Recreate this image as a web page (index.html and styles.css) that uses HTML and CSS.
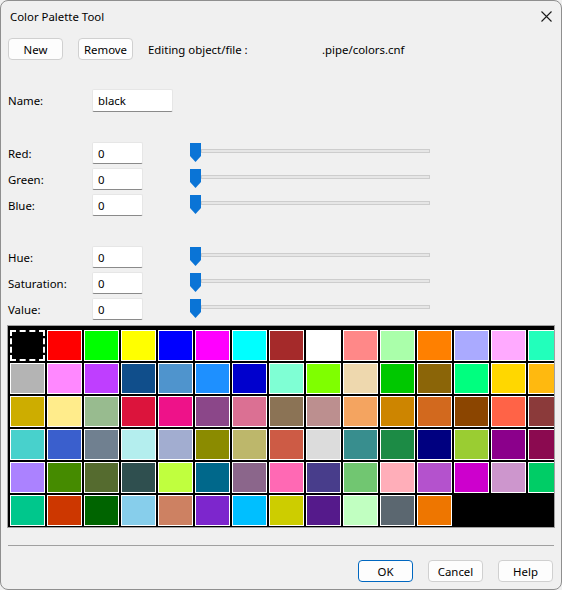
FILE: index.html
```html
<!DOCTYPE html>
<html>
<head>
<meta charset="utf-8">
<title>Color Palette Tool</title>
<link rel="stylesheet" href="styles.css">
</head>
<body>
<div class="window">
  <div class="titlebar">
    <span class="title">Color Palette Tool</span>
    <svg class="close" width="11" height="11" viewBox="0 0 11 11"><path d="M0.5 0.5 L10.5 10.5 M10.5 0.5 L0.5 10.5" stroke="#1a1a1a" stroke-width="1.1" fill="none"/></svg>
  </div>

  <div class="toolbar">
    <button class="btn">New</button>
    <button class="btn">Remove</button>
    <span class="editing">Editing object/file :</span>
    <span class="file">.pipe/colors.cnf</span>
  </div>

  <div class="row name-row">
    <span class="label">Name:</span>
    <div class="field field-name">black</div>
  </div>

  <div class="group">
    <div class="row">
      <span class="label">Red:</span>
      <div class="field field-num">0</div>
      <div class="slider"><svg class="thumb" width="11" height="20" viewBox="0 0 11 20"><path d="M0 0 H11 V13 L5.5 19 L0 13 Z" fill="#0a74d6"/></svg><div class="track"></div></div>
    </div>
    <div class="row">
      <span class="label">Green:</span>
      <div class="field field-num">0</div>
      <div class="slider"><svg class="thumb" width="11" height="20" viewBox="0 0 11 20"><path d="M0 0 H11 V13 L5.5 19 L0 13 Z" fill="#0a74d6"/></svg><div class="track"></div></div>
    </div>
    <div class="row">
      <span class="label">Blue:</span>
      <div class="field field-num">0</div>
      <div class="slider"><svg class="thumb" width="11" height="20" viewBox="0 0 11 20"><path d="M0 0 H11 V13 L5.5 19 L0 13 Z" fill="#0a74d6"/></svg><div class="track"></div></div>
    </div>
  </div>

  <div class="group">
    <div class="row">
      <span class="label">Hue:</span>
      <div class="field field-num">0</div>
      <div class="slider"><svg class="thumb" width="11" height="20" viewBox="0 0 11 20"><path d="M0 0 H11 V13 L5.5 19 L0 13 Z" fill="#0a74d6"/></svg><div class="track"></div></div>
    </div>
    <div class="row">
      <span class="label">Saturation:</span>
      <div class="field field-num">0</div>
      <div class="slider"><svg class="thumb" width="11" height="20" viewBox="0 0 11 20"><path d="M0 0 H11 V13 L5.5 19 L0 13 Z" fill="#0a74d6"/></svg><div class="track"></div></div>
    </div>
    <div class="row">
      <span class="label">Value:</span>
      <div class="field field-num">0</div>
      <div class="slider"><svg class="thumb" width="11" height="20" viewBox="0 0 11 20"><path d="M0 0 H11 V13 L5.5 19 L0 13 Z" fill="#0a74d6"/></svg><div class="track"></div></div>
    </div>
  </div>

  <div class="palette">
    <div class="cells">
      <div class="cell selected"></div>
      <div class="cell" style="background:#ff0000"></div>
      <div class="cell" style="background:#00ff00"></div>
      <div class="cell" style="background:#ffff00"></div>
      <div class="cell" style="background:#0000ff"></div>
      <div class="cell" style="background:#ff00ff"></div>
      <div class="cell" style="background:#00ffff"></div>
      <div class="cell" style="background:#a52a2a"></div>
      <div class="cell" style="background:#ffffff"></div>
      <div class="cell" style="background:#ff8888"></div>
      <div class="cell" style="background:#aaffaa"></div>
      <div class="cell" style="background:#ff8000"></div>
      <div class="cell" style="background:#aaaaff"></div>
      <div class="cell" style="background:#ffaaff"></div>
      <div class="cell" style="background:#22ffbb"></div>

      <div class="cell" style="background:#b4b4b4"></div>
      <div class="cell" style="background:#ff88ff"></div>
      <div class="cell" style="background:#bf3eff"></div>
      <div class="cell" style="background:#104e8b"></div>
      <div class="cell" style="background:#4f94cd"></div>
      <div class="cell" style="background:#1e90ff"></div>
      <div class="cell" style="background:#0000cd"></div>
      <div class="cell" style="background:#7fffd4"></div>
      <div class="cell" style="background:#7fff00"></div>
      <div class="cell" style="background:#eed8ae"></div>
      <div class="cell" style="background:#00c800"></div>
      <div class="cell" style="background:#8b6508"></div>
      <div class="cell" style="background:#00ff7f"></div>
      <div class="cell" style="background:#ffd700"></div>
      <div class="cell" style="background:#ffb90f"></div>

      <div class="cell" style="background:#cdad00"></div>
      <div class="cell" style="background:#ffec8b"></div>
      <div class="cell" style="background:#98bb8f"></div>
      <div class="cell" style="background:#dc143c"></div>
      <div class="cell" style="background:#ee1289"></div>
      <div class="cell" style="background:#8b4789"></div>
      <div class="cell" style="background:#db7093"></div>
      <div class="cell" style="background:#8b7355"></div>
      <div class="cell" style="background:#bc8f8f"></div>
      <div class="cell" style="background:#f4a460"></div>
      <div class="cell" style="background:#cd8500"></div>
      <div class="cell" style="background:#d2691e"></div>
      <div class="cell" style="background:#8b4500"></div>
      <div class="cell" style="background:#ff6347"></div>
      <div class="cell" style="background:#8b3a3a"></div>

      <div class="cell" style="background:#48d1cc"></div>
      <div class="cell" style="background:#3a5fcd"></div>
      <div class="cell" style="background:#708090"></div>
      <div class="cell" style="background:#b4eeee"></div>
      <div class="cell" style="background:#a2add0"></div>
      <div class="cell" style="background:#8b8b00"></div>
      <div class="cell" style="background:#bdb76b"></div>
      <div class="cell" style="background:#cd5b45"></div>
      <div class="cell" style="background:#dcdcdc"></div>
      <div class="cell" style="background:#388e8e"></div>
      <div class="cell" style="background:#1c8b45"></div>
      <div class="cell" style="background:#000080"></div>
      <div class="cell" style="background:#9acd32"></div>
      <div class="cell" style="background:#8b008b"></div>
      <div class="cell" style="background:#8b0a50"></div>

      <div class="cell" style="background:#ab82ff"></div>
      <div class="cell" style="background:#458b00"></div>
      <div class="cell" style="background:#556b2f"></div>
      <div class="cell" style="background:#2f4f4f"></div>
      <div class="cell" style="background:#c0ff3e"></div>
      <div class="cell" style="background:#00688b"></div>
      <div class="cell" style="background:#8b668b"></div>
      <div class="cell" style="background:#ff69b4"></div>
      <div class="cell" style="background:#483d8b"></div>
      <div class="cell" style="background:#71c671"></div>
      <div class="cell" style="background:#ffaeb9"></div>
      <div class="cell" style="background:#b452cd"></div>
      <div class="cell" style="background:#cd00cd"></div>
      <div class="cell" style="background:#cd96cd"></div>
      <div class="cell" style="background:#00cd66"></div>

      <div class="cell" style="background:#00c78c"></div>
      <div class="cell" style="background:#cd3700"></div>
      <div class="cell" style="background:#006400"></div>
      <div class="cell" style="background:#87ceeb"></div>
      <div class="cell" style="background:#cd8162"></div>
      <div class="cell" style="background:#7d26cd"></div>
      <div class="cell" style="background:#00bfff"></div>
      <div class="cell" style="background:#cdcd00"></div>
      <div class="cell" style="background:#551a8b"></div>
      <div class="cell" style="background:#c1ffc1"></div>
      <div class="cell" style="background:#5b6770"></div>
      <div class="cell" style="background:#ee7600"></div>
      <div class="cell empty"></div>
      <div class="cell empty"></div>
      <div class="cell empty"></div>
    </div>
  </div>

  <div class="separator"></div>

  <div class="footer">
    <button class="btn btn-default">OK</button>
    <button class="btn">Cancel</button>
    <button class="btn">Help</button>
  </div>
</div>
</body>
</html>
```

FILE: styles.css
```css
html, body {
  margin: 0;
  padding: 0;
  background: #f0f0f0;
}

body {
  font-family: "Segoe UI", "Noto Sans", "Liberation Sans", sans-serif;
  font-size: 11.4px;
  color: #000;
}

.window {
  width: 562px;
  height: 590px;
  box-sizing: border-box;
  border: 1px solid #8f8f8f;
  border-radius: 8px;
  background: #f0f0f0;
  display: flex;
  flex-direction: column;
  overflow: hidden;
}

.titlebar {
  height: 31px;
  flex: none;
  display: flex;
  align-items: center;
  justify-content: space-between;
  padding: 0 9px 0 9px;
}

.title {
  font-size: 11.4px;
}

.close {
  display: block;
}

.toolbar {
  margin-top: 6px;
  height: 22px;
  flex: none;
  display: flex;
  align-items: center;
  padding-left: 7px;
}

.btn {
  width: 55px;
  height: 22px;
  box-sizing: border-box;
  padding: 0;
  margin: 0;
  background: #fdfdfd;
  border: 1px solid #d0d0d0;
  border-radius: 4px;
  font-family: inherit;
  font-size: 11.4px;
  color: #000;
}

.toolbar .btn {
  margin-right: 15px;
}

.editing {
  width: 174px;
  flex: none;
}

.row {
  height: 22px;
  display: flex;
  align-items: center;
  padding-left: 7px;
}

.name-row {
  margin-top: 29px;
  height: 23px;
}

.label {
  width: 84px;
  flex: none;
}

.field {
  height: 100%;
  box-sizing: border-box;
  background: #fff;
  border: 1px solid #e6e6e6;
  border-bottom-color: #8a8a8a;
  border-radius: 2px;
  padding-left: 5px;
  display: flex;
  align-items: center;
  flex: none;
}

.field-name {
  width: 81px;
}

.field-num {
  width: 51px;
}

.group {
  margin-top: 30px;
  display: flex;
  flex-direction: column;
  gap: 4px;
}

.slider {
  margin-left: 47px;
  align-self: flex-start;
  display: flex;
  height: 22px;
}

.thumb {
  display: block;
  margin-top: 1px;
}

.track {
  width: 229px;
  height: 4px;
  margin-top: 7px;
  box-sizing: border-box;
  background: #e6e6e6;
  border: 1px solid #cdcdcd;
}

.palette {
  margin-top: 5px;
  margin-left: 6px;
  width: 548px;
  height: 203px;
  box-sizing: border-box;
  border: 1px solid #a0a0a0;
  background: #000;
  padding: 4px 0 0 2px;
  overflow: hidden;
  flex: none;
}

.cells {
  display: grid;
  grid-template-columns: repeat(15, 35px);
  grid-auto-rows: 31px;
  gap: 2px;
  width: 553px;
}

.cell {
  box-sizing: border-box;
  border: 1px solid #fff;
}

.cell.selected {
  background: #000;
  border: 2px dashed #fff;
}

.cell.empty {
  background: #000;
  border: none;
}

.separator {
  margin: 17px 7px 0 7px;
  height: 1px;
  background: #a0a0a0;
  flex: none;
}

.footer {
  margin-top: 14px;
  display: flex;
  justify-content: flex-end;
  gap: 15px;
  padding-right: 8px;
}

.btn-default {
  border-color: #0067c0;
}
```
